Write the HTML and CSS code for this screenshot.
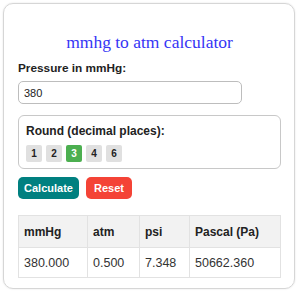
FILE: index.html
```html
<!DOCTYPE html>
<html>
<head>
<meta charset="utf-8">
<link rel="stylesheet" href="styles.css">
</head>
<body>
<div class="card">
  <h2 class="title">mmhg to atm calculator</h2>
  <label class="label" for="p">Pressure in mmHg:</label>
  <input class="input" id="p" type="text" value="380">
  <div class="round">
    <div class="round-label">Round (decimal places):</div>
    <div class="opts">
      <span class="opt">1</span>
      <span class="opt">2</span>
      <span class="opt active">3</span>
      <span class="opt">4</span>
      <span class="opt">6</span>
    </div>
  </div>
  <div class="actions">
    <button class="btn calc">Calculate</button>
    <button class="btn reset">Reset</button>
  </div>
  <table class="results">
    <tr><th class="c1">mmHg</th><th class="c2">atm</th><th class="c3">psi</th><th class="c4">Pascal (Pa)</th></tr>
    <tr><td>380.000</td><td>0.500</td><td>7.348</td><td>50662.360</td></tr>
  </table>
</div>
</body>
</html>
```
FILE: styles.css
```css
html, body { margin: 0; padding: 0; background: #fff; }
body { font-family: "Liberation Sans", Arial, sans-serif; color: #222; }
.card {
  margin: 3px;
  width: 292px;
  height: 286px;
  box-sizing: border-box;
  border: 1px solid #d6d6d6;
  border-radius: 10px;
  box-shadow: 0 0 2px rgba(0,0,0,0.12);
  padding: 0 13px 0 14px;
}
.title {
  font-family: "Liberation Serif", "DejaVu Serif", serif;
  font-weight: normal;
  color: #3535f5;
  font-size: 17.5px;
  text-align: center;
  margin: 27px 0 8px;
  line-height: 22px;
}
.label {
  display: block;
  font-weight: bold;
  font-size: 11.8px;
  line-height: 15px;
  color: #222;
  margin-bottom: 5px;
}
.input {
  display: block;
  width: 85%;
  height: 23px;
  box-sizing: border-box;
  border: 1px solid #bdbdbd;
  border-radius: 5px;
  padding: 0 5px;
  font-family: "Liberation Sans", Arial, sans-serif;
  font-size: 11px;
  color: #222;
  margin: 0 0 11px;
}
.round {
  border: 1px solid #c8c8c8;
  border-radius: 6px;
  padding: 8px 7px 6px;
  height: 54px;
  box-sizing: border-box;
}
.round-label {
  font-weight: bold;
  font-size: 12px;
  line-height: 15px;
  margin-bottom: 6px;
}
.opts { display: flex; gap: 4px; }
.opt {
  width: 16px;
  height: 17px;
  background: #e0e0e0;
  border-radius: 2px;
  font-size: 10px;
  font-weight: bold;
  display: flex;
  align-items: center;
  justify-content: center;
  color: #222;
}
.opt.active { background: #4caf50; color: #fff; }
.actions { display: flex; gap: 7px; margin: 8px 0 16px; }
.btn {
  border: none;
  border-radius: 5px;
  color: #fff;
  font-family: "Liberation Sans", Arial, sans-serif;
  font-weight: bold;
  font-size: 11px;
  height: 22px;
  padding: 0 6px;
}
.calc { background: #008080; width: 61px; }
.reset { background: #f44336; width: 46px; }
.results {
  width: 100%;
  border-collapse: collapse;
  font-size: 12px;
}
.results th, .results td {
  border: 1px solid #e2e2e2;
  text-align: left;
  padding: 0 5px;
}
.results th { background: #f2f2f2; font-weight: bold; height: 31px; }
.results td { height: 29px; color: #333; font-size: 12.5px; }
.c1 { width: 58px; }
.c2 { width: 41px; }
.c3 { width: 39px; }
```
